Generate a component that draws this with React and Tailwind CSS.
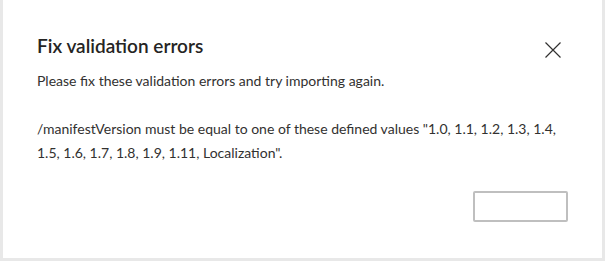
export default function App() {
  return (
    <div className="w-full h-[261px] bg-[#e8e8e8] pl-[3px] pr-[3px] pb-[3px]" style={{ fontFamily: 'Lato, "Noto Sans", sans-serif' }}>
      <div className="h-full bg-white flex flex-col pl-[34px] pr-[34px]">
        <div className="flex justify-between items-start pt-[32px]">
          <h1 className="text-[19px] leading-[28px] font-semibold text-[#252423]">Fix validation errors</h1>
          <button className="mt-[10px] mr-[7px] w-4 h-4 text-[#323130]" aria-label="Close">
            <svg viewBox="0 0 16 16" width="16" height="16" fill="none" stroke="currentColor" strokeWidth="1.2">
              <path d="M0.5 0.5 L15.5 15.5 M15.5 0.5 L0.5 15.5" />
            </svg>
          </button>
        </div>
        <p className="mt-[11px] text-[14px] leading-[20px] text-[#323130]">
          Please fix these validation errors and try importing again.
        </p>
        <p className="mt-[26px] text-[14px] leading-[24px] text-[#323130]">
          /manifestVersion must be equal to one of these defined values "1.0, 1.1, 1.2, 1.3, 1.4, 1.5, 1.6, 1.7, 1.8, 1.9, 1.11, Localization".
        </p>
        <div className="flex justify-end mt-[26px]">
          <button className="w-[95px] h-[31px] border-2 border-[#bfbfbf] rounded-[2px] bg-white"></button>
        </div>
      </div>
    </div>
  );
}
